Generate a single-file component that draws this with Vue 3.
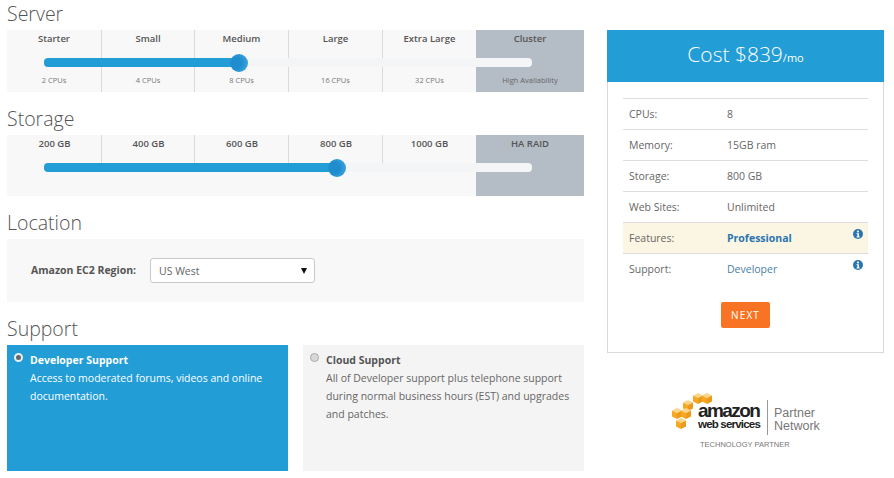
<script setup>
const servers = [
  ['Starter', '2 CPUs'], ['Small', '4 CPUs'], ['Medium', '8 CPUs'],
  ['Large', '16 CPUs'], ['Extra Large', '32 CPUs'], ['Cluster', 'High Availability']
]
const storage = ['200 GB', '400 GB', '600 GB', '800 GB', '1000 GB', 'HA RAID']
const specs = [
  { k: 'CPUs:', v: '8' },
  { k: 'Memory:', v: '15GB ram' },
  { k: 'Storage:', v: '800 GB' },
  { k: 'Web Sites:', v: 'Unlimited' },
  { k: 'Features:', v: 'Professional', hl: true, info: true },
  { k: 'Support:', v: 'Developer', link: true, info: true }
]
const cubes = [[22, 0], [31, 0], [12, 7], [1, 15], [10, 15], [5, 25]]
const serverFill = 195
const storageFill = 293
</script>

<template>
  <div class="page">
    <main class="left">
      <h2 class="h first">Server</h2>
      <section class="slider-panel server">
        <div v-for="(s, i) in servers" :key="s[0]" class="cell" :class="{ ha: i === 5 }">
          <strong>{{ s[0] }}</strong>
          <small>{{ s[1] }}</small>
        </div>
        <div class="track"><div class="fill" :style="{ width: serverFill + 'px' }"><span class="knob"></span></div></div>
      </section>

      <h2 class="h">Storage</h2>
      <section class="slider-panel store">
        <div v-for="(s, i) in storage" :key="s" class="cell" :class="{ ha: i === 5 }">
          <strong>{{ s }}</strong>
        </div>
        <div class="track"><div class="fill" :style="{ width: storageFill + 'px' }"><span class="knob"></span></div></div>
      </section>

      <h2 class="h">Location</h2>
      <section class="location">
        <label>Amazon EC2 Region:</label>
        <div class="select"><span>US West</span><i></i></div>
      </section>

      <h2 class="h">Support</h2>
      <section class="support">
        <div class="option active">
          <span class="radio"></span>
          <div>
            <b>Developer Support</b>
            <p>Access to moderated forums, videos and online documentation.</p>
          </div>
        </div>
        <div class="option">
          <span class="radio"></span>
          <div>
            <b>Cloud Support</b>
            <p>All of Developer support plus telephone support during normal business hours (EST) and upgrades and patches.</p>
          </div>
        </div>
      </section>
    </main>

    <aside class="right">
      <div class="cost">Cost $839<span>/mo</span></div>
      <div class="box">
        <div class="rows">
          <div v-for="r in specs" :key="r.k" class="row" :class="{ hl: r.hl, link: r.link }">
            <span class="k">{{ r.k }}</span>
            <span class="v">{{ r.v }}</span>
            <svg v-if="r.info" class="info" viewBox="0 0 12 12" width="10" height="10">
              <circle cx="6" cy="6" r="6" fill="#2a74b0" />
              <circle cx="6" cy="3" r="1.3" fill="#fff" />
              <path d="M4.2 5h2.9v4.1h1v1H4.2v-1h1V6h-1z" fill="#fff" />
            </svg>
          </div>
        </div>
        <button class="next">NEXT</button>
      </div>
      <div class="aws">
        <div class="aws-top">
          <svg class="cubes" viewBox="0 0 41 36" width="41" height="36">
            <g v-for="(c, i) in cubes" :key="i" :transform="`translate(${c[0]} ${c[1]})`">
              <path d="M0 2.5 5 0l5 2.5L5 5z" fill="#fbd58c" />
              <path d="M0 2.5 5 5v6L0 8.5z" fill="#f7a823" />
              <path d="M10 2.5 5 5v6l5-2.5z" fill="#eb9a1a" />
            </g>
          </svg>
          <div class="aws-word">
            <div class="amazon">amazon</div>
            <div class="ws">web services</div>
          </div>
          <div class="sep"></div>
          <div class="pn">Partner<br />Network</div>
        </div>
        <div class="tp">TECHNOLOGY PARTNER</div>
      </div>
    </aside>
  </div>
</template>

<style>
html, body { margin: 0; background: #fff; }
</style>

<style scoped>
.page {
  display: flex;
  width: 894px;
  height: 478px;
  overflow: hidden;
  box-sizing: border-box;
  padding-left: 7px;
  font-family: "Open Sans", "Liberation Sans", sans-serif;
  color: #555;
}
.left { width: 577px; flex: none; }
.right { width: 277px; flex: none; margin-left: 23px; padding-top: 30px; }

.h {
  margin: 0;
  height: 43px;
  padding-top: 13px;
  box-sizing: border-box;
  font-size: 19.5px;
  line-height: 28px;
  font-weight: 300;
  color: #555;
}
.h.first { height: 30px; padding-top: 0; line-height: 27px; }

.slider-panel {
  position: relative;
  display: grid;
  grid-template-columns: 95px 93px 94px 94px 93px 108px;
  background: #f8f8f8;
}
.server { height: 62px; }
.store { height: 61px; }
.cell {
  position: relative;
  box-sizing: border-box;
  border-right: 1px solid #dadada;
  text-align: center;
  padding-top: 2px;
}
.cell.ha { background: #b4bcc6; border-right: 0; }
.cell:nth-child(5) { border-right: 0; }
.store .cell:not(.ha) { border-right: 0; }
.store .cell:not(.ha):nth-child(-n+4)::after {
  content: "";
  position: absolute;
  right: 0;
  top: 0;
  width: 1px;
  height: 28px;
  background: #dadada;
}
.cell strong {
  display: block;
  font-size: 9.5px;
  line-height: 14px;
  font-weight: 600;
  color: #555;
}
.cell small {
  position: absolute;
  left: 0;
  right: 0;
  top: 44px;
  font-size: 7.5px;
  line-height: 12px;
  color: #777;
}
.cell.ha small { color: #666; }
.track {
  position: absolute;
  left: 37px;
  top: 28px;
  width: 488px;
  height: 9px;
  border-radius: 4px;
  background: #f4f5f6;
}
.fill {
  position: relative;
  height: 9px;
  border-radius: 4px;
  background: #229dd6;
}
.knob {
  position: absolute;
  right: -9px;
  top: -4px;
  width: 18px;
  height: 18px;
  border-radius: 50%;
  background: radial-gradient(circle at 35% 50%, #1e8ccd 0 35%, #38a2da 75%);
}

.location {
  height: 63px;
  box-sizing: border-box;
  background: #f8f8f8;
  display: flex;
  align-items: center;
  padding: 0 0 2px 24px;
}
.location label {
  font-size: 10.5px;
  font-weight: 700;
  color: #555;
  width: 119px;
  flex: none;
}
.select {
  position: relative;
  width: 165px;
  height: 25px;
  box-sizing: border-box;
  margin-top: 2px;
  background: #fff;
  border: 1px solid #c9c9c9;
  border-radius: 3px;
  padding-left: 8px;
  font-size: 10.5px;
  line-height: 25px;
  color: #666;
}
.select i {
  position: absolute;
  right: 7px;
  top: 9px;
  border-left: 3px solid transparent;
  border-right: 3px solid transparent;
  border-top: 6px solid #111;
}

.support {
  display: flex;
  gap: 15px;
  height: 126px;
}
.option {
  flex: 1;
  display: flex;
  background: #f4f4f4;
  padding: 6px 0 0 7px;
  box-sizing: border-box;
  font-size: 10.5px;
  line-height: 18px;
  color: #666;
}
.option.active { background: #229dd6; color: #fff; }
.option b { display: block; font-weight: 700; color: #555; }
.option.active b { color: #fff; }
.option p { margin: 0; padding-right: 10px; }
.radio {
  flex: none;
  width: 7px;
  height: 7px;
  margin: 2px 7px 0 0;
  border-radius: 50%;
  background: #d9d9d9;
  border: 1px solid #aaa;
}
.active .radio {
  background: #666;
  border: 2px solid #e9eef1;
  width: 5px;
  height: 5px;
}

.cost {
  height: 52px;
  background: #229dd6;
  color: #fff;
  text-align: center;
  font-size: 21px;
  font-weight: 300;
  line-height: 48px;
}
.cost span { font-size: 11px; font-weight: 400; }
.box {
  height: 271px;
  box-sizing: border-box;
  border: 1px solid #d9d9d9;
  border-top: 0;
  padding: 16px 15px 0;
  text-align: center;
}
.rows { border-top: 1px solid #ddd; }
.row {
  position: relative;
  display: flex;
  height: 31px;
  box-sizing: border-box;
  padding-left: 6px;
  border-bottom: 1px solid #ddd;
  font-size: 10.5px;
  line-height: 30px;
  color: #666;
  text-align: left;
}
.row:last-child { border-bottom: 0; }
.row .k { width: 98px; flex: none; }
.row.hl { background: #fbf6e3; }
.row.hl .v { color: #2a74b0; font-weight: 700; }
.row.link .v { color: #4a7ea6; }
.info { position: absolute; right: 5px; top: 6px; }
.next {
  display: block;
  margin: 17px auto 0;
  width: 49px;
  height: 26px;
  padding: 0;
  border: 0;
  border-radius: 2px;
  background: #f97325;
  color: #fff;
  font-family: inherit;
  font-size: 10px;
  letter-spacing: 1.2px;
  font-weight: 400;
}

.aws { margin-top: 40px; padding-left: 64px; }
.aws-top { display: flex; align-items: flex-start; height: 43px; }
.cubes { flex: none; }
.aws-word {
  position: relative;
  width: 61px;
  flex: none;
  margin-left: -14px;
  margin-top: 10px;
  font-family: "Liberation Sans", sans-serif;
  color: #222;
}
.amazon { font-size: 19px; font-weight: 700; line-height: 16px; letter-spacing: -1.6px; }
.ws { font-size: 11.5px; font-weight: 700; line-height: 11px; letter-spacing: -0.8px; white-space: nowrap; }
.sep { width: 1px; height: 35px; background: #999; margin: 7px 6px 0 8px; flex: none; }
.pn {
  font-family: "Liberation Sans", sans-serif;
  font-size: 12.5px;
  line-height: 13px;
  color: #777;
  margin-top: 14px;
}
.tp {
  margin: 4px 0 0 29px;
  font-family: "Liberation Sans", sans-serif;
  font-size: 7.5px;
  line-height: 10px;
  color: #777;
}
</style>
